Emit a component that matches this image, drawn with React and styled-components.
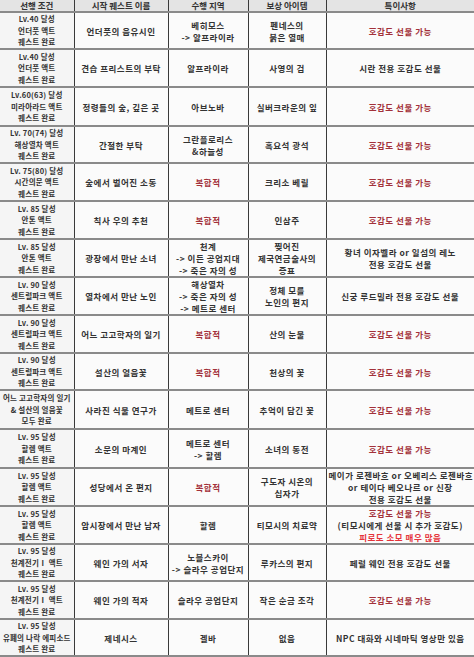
import React from 'react';
import styled, { createGlobalStyle } from 'styled-components';

const GlobalStyle = createGlobalStyle`
  html, body {
    margin: 0;
    padding: 0;
    background: #ffffff;
  }
  body {
    font-family: "Noto Sans CJK KR", "Noto Sans", sans-serif;
  }
`;

const Table = styled.table`
  width: 474px;
  border-collapse: collapse;
  table-layout: fixed;
  font-family: "Noto Sans CJK KR", "Noto Sans", sans-serif;
  font-weight: 700;
  color: #333;
  text-align: center;
`;

const HeadCell = styled.th`
  height: 11px;
  padding: 0;
  font-size: 8.5px;
  line-height: 11px;
  font-weight: 700;
  color: #333;
  background: #e4e4e4;
  border-right: 1px solid #3a3a3a;
  border-bottom: 2px solid #8a8a8a;
  &:last-child {
    border-right: none;
  }
`;

const Row = styled.tr`
  height: ${p => p.h}px;
`;

const Cell = styled.td`
  padding: 0 2px;
  font-size: ${p => (p.small ? '7.5px' : '8.5px')};
  line-height: ${p => (p.small ? '11.5px' : '12px')};
  letter-spacing: ${p => (p.small ? '0.2px' : '0.5px')};
  background: ${p => (p.small ? '#f5f5f5' : '#fbfbfb')};
  border-right: 1px solid #3a3a3a;
  border-bottom: 2px solid #8a8a8a;
  vertical-align: middle;
  white-space: nowrap;
  overflow: hidden;
  &:last-child {
    border-right: none;
  }
`;

const Red = styled.span`
  color: ${p => (p.bright ? '#e5343b' : '#a3313a')};
`;

const Line = styled.div``;

const GIFT = <Red>호감도 선물 가능</Red>;
const MIX = <Red>복합적</Red>;

const lines = arr => arr.map((t, i) => <Line key={i}>{t}</Line>);

const rows = [
  { h: 37, cond: ['Lv.40 달성', '언더풋 액트', '퀘스트 완료'], quest: '언더풋의 음유시인', area: lines(['베히모스', '-> 알프라이라']), item: lines(['펜네스의', '붉은 열매']), note: GIFT },
  { h: 38, cond: ['Lv.40 달성', '언더풋 액트', '퀘스트 완료'], quest: '견습 프리스트의 부탁', area: '알프라이라', item: '사영의 검', note: '시란 전용 호감도 선물' },
  { h: 39, cond: ['Lv.60(63) 달성', '미라아라드 액트', '퀘스트 완료'], quest: '정령들의 숲, 깊은 곳', area: '아브노바', item: '실버크라운의 잎', note: GIFT },
  { h: 37, cond: ['Lv. 70(74) 달성', '해상열차 액트', '퀘스트 완료'], quest: '간절한 부탁', area: lines(['그란플로리스', '&하늘성']), item: '흑요석 광석', note: GIFT },
  { h: 38, cond: ['Lv. 75(80) 달성', '시간의문 액트', '퀘스트 완료'], quest: '숲에서 벌어진 소동', area: MIX, item: '크리소 베릴', note: GIFT },
  { h: 38, cond: ['Lv. 85 달성', '안톤 액트', '퀘스트 완료'], quest: '칙사 우의 추천', area: MIX, item: '인삼주', note: GIFT },
  { h: 38, cond: ['Lv. 85 달성', '안톤 액트', '퀘스트 완료'], quest: '광장에서 만난 소녀', area: lines(['천계', '-> 이든 공업지대', '-> 죽은 자의 성']), item: lines(['찢어진', '제국연금술사의', '증표']), note: lines(['황녀 이자벨라 or 일섬의 레노', '전용 호감도 선물']) },
  { h: 38, cond: ['Lv. 90 달성', '센트럴파크 액트', '퀘스트 완료'], quest: '열차에서 만난 노인', area: lines(['해상열차', '-> 죽은 자의 성', '-> 메트로 센터']), item: lines(['정체 모를', '노인의 편지']), note: '신궁 루드밀라 전용 호감도 선물' },
  { h: 38, cond: ['Lv. 90 달성', '센트럴파크 액트', '퀘스트 완료'], quest: '어느 고고학자의 일기', area: MIX, item: '산의 눈물', note: GIFT },
  { h: 37, cond: ['Lv. 90 달성', '센트럴파크 액트', '퀘스트 완료'], quest: '설산의 얼음꽃', area: MIX, item: '천상의 꽃', note: GIFT },
  { h: 39, cond: ['어느 고고학자의 일기', '& 설산의 얼음꽃', '모두 완료'], quest: '사라진 식물 연구가', area: '메트로 센터', item: '추억이 담긴 꽃', note: GIFT },
  { h: 39, cond: ['Lv. 95 달성', '할렘 액트', '퀘스트 완료'], quest: '소문의 마계인', area: lines(['메트로 센터', '-> 할렘']), item: '소녀의 동전', note: GIFT },
  { h: 37, cond: ['Lv. 95 달성', '할렘 액트', '퀘스트 완료'], quest: '성당에서 온 편지', area: MIX, item: lines(['구도자 시온의', '십자가']), note: lines(['메이가 로젠바흐 or 오베리스 로젠바흐', 'or 테이다 베오나르 or 신장', '전용 호감도 선물']) },
  { h: 38, cond: ['Lv. 95 달성', '할렘 액트', '퀘스트 완료'], quest: '암시장에서 만난 남자', area: '할렘', item: '티모시의 치료약', note: [<Line key="a"><Red>호감도 선물 가능</Red></Line>, <Line key="b">(티모시에게 선물 시 추가 호감도)</Line>, <Line key="c"><Red bright>피로도 소모 매우 많음</Red></Line>] },
  { h: 37, cond: ['Lv. 95 달성', '천계전기Ⅰ 액트', '퀘스트 완료'], quest: '웨인 가의 서자', area: lines(['노블스카이', '-> 슬라우 공업단지']), item: '루카스의 편지', note: '페럴 웨인 전용 호감도 선물' },
  { h: 38, cond: ['Lv. 95 달성', '천계전기Ⅰ 액트', '퀘스트 완료'], quest: '웨인 가의 적자', area: '슬라우 공업단지', item: '작은 순금 조각', note: GIFT },
  { h: 37, cond: ['Lv. 95 달성', '유폐의 나락 에피소드', '퀘스트 완료'], quest: '제네시스', area: '겔바', item: '없음', note: 'NPC 대화와 시네마틱 영상만 있음' },
];

const App = () => (
  <>
    <GlobalStyle />
    <Table>
      <colgroup>
        <col style={{ width: 74 }} />
        <col style={{ width: 94 }} />
        <col style={{ width: 80 }} />
        <col style={{ width: 78 }} />
        <col style={{ width: 148 }} />
      </colgroup>
      <thead>
        <tr>
          <HeadCell>선행 조건</HeadCell>
          <HeadCell>시작 퀘스트 이름</HeadCell>
          <HeadCell>수행 지역</HeadCell>
          <HeadCell>보상 아이템</HeadCell>
          <HeadCell>특이사항</HeadCell>
        </tr>
      </thead>
      <tbody>
        {rows.map((r, i) => (
          <Row key={i} h={r.h}>
            <Cell small>{lines(r.cond)}</Cell>
            <Cell>{r.quest}</Cell>
            <Cell>{r.area}</Cell>
            <Cell>{r.item}</Cell>
            <Cell>{r.note}</Cell>
          </Row>
        ))}
      </tbody>
    </Table>
  </>
);

export default App;
